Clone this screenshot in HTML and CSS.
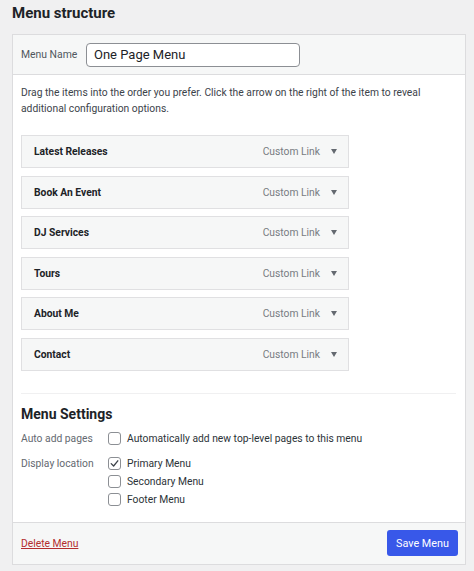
FILE: index.html
```html
<!DOCTYPE html>
<html lang="en">
<head>
<meta charset="utf-8">
<title>Menu structure</title>
<link rel="stylesheet" href="styles.css">
</head>
<body>
<div class="page">
  <h2 class="page-title">Menu structure</h2>
  <div class="panel">
    <div class="panel-head">
      <label class="name-label" for="menu-name">Menu Name</label>
      <input id="menu-name" class="name-input" type="text" value="One Page Menu">
    </div>
    <div class="panel-body">
      <p class="desc">Drag the items into the order you prefer. Click the arrow on the right of the item to reveal additional configuration options.</p>
      <ul class="items">
        <li class="item"><span class="item-title">Latest Releases</span><span class="item-type">Custom Link</span><span class="arrow"></span></li>
        <li class="item"><span class="item-title">Book An Event</span><span class="item-type">Custom Link</span><span class="arrow"></span></li>
        <li class="item"><span class="item-title">DJ Services</span><span class="item-type">Custom Link</span><span class="arrow"></span></li>
        <li class="item"><span class="item-title">Tours</span><span class="item-type">Custom Link</span><span class="arrow"></span></li>
        <li class="item"><span class="item-title">About Me</span><span class="item-type">Custom Link</span><span class="arrow"></span></li>
        <li class="item"><span class="item-title">Contact</span><span class="item-type">Custom Link</span><span class="arrow"></span></li>
      </ul>
      <div class="settings">
        <h3 class="settings-title">Menu Settings</h3>
        <div class="setting-row">
          <span class="setting-label">Auto add pages</span>
          <div class="options">
            <label class="opt"><span class="box"></span>Automatically add new top-level pages to this menu</label>
          </div>
        </div>
        <div class="setting-row">
          <span class="setting-label">Display location</span>
          <div class="options">
            <label class="opt"><span class="box checked"><svg viewBox="0 0 13 13" width="13" height="13"><path d="M3.2 6.6 L5.6 9 L9.8 3.8" fill="none" stroke="#3c434a" stroke-width="1.3" stroke-linecap="round" stroke-linejoin="round"/></svg></span>Primary Menu</label>
            <label class="opt"><span class="box"></span>Secondary Menu</label>
            <label class="opt"><span class="box"></span>Footer Menu</label>
          </div>
        </div>
      </div>
    </div>
    <div class="panel-foot">
      <a class="delete" href="#">Delete Menu</a>
      <button class="save" type="button">Save Menu</button>
    </div>
  </div>
</div>
</body>
</html>
```
FILE: styles.css
```css
* { box-sizing: border-box; }
html, body { margin: 0; padding: 0; }
body {
  background: #f0f0f1;
  font-family: Roboto, "Liberation Sans", Arial, sans-serif;
  color: #1d2327;
  width: 474px;
  height: 571px;
  overflow: hidden;
}
.page { padding: 4px 8px 0 12px; }
.page-title {
  margin: 0;
  font-size: 15px;
  font-weight: 700;
  line-height: 18px;
  height: 30px;
  color: #1d2327;
}
.panel {
  background: #fff;
  border: 1px solid #dcdcde;
  width: 454px;
}
.panel-head {
  background: #f6f7f7;
  border-bottom: 1px solid #dcdcde;
  height: 40px;
  display: flex;
  align-items: center;
  padding: 0 8px;
}
.name-label {
  font-size: 10.4px;
  color: #50575e;
  width: 65px;
}
.name-input {
  width: 214px;
  height: 24px;
  border: 1px solid #8c8f94;
  border-radius: 4px;
  padding: 0 7px;
  font-family: inherit;
  font-size: 13px;
  color: #1d2327;
  background: #fff;
  margin: 0;
}
.panel-body { padding: 10px 9px 0 8px; }
.desc {
  margin: 0 0 18px;
  font-size: 10.3px;
  line-height: 16px;
  color: #3c434a;
}
.items {
  list-style: none;
  margin: 0;
  padding: 0;
  display: flex;
  flex-direction: column;
  gap: 7.5px;
}
.item {
  width: 328px;
  height: 33px;
  background: #f6f7f7;
  border: 1px solid #e0e0e2;
  display: flex;
  align-items: center;
  padding: 0 10px 0 12px;
}
.item-title {
  flex: 1;
  font-size: 10.3px;
  font-weight: 700;
  color: #1d2327;
}
.item-type {
  font-size: 10.3px;
  color: #787c82;
  margin-right: 11px;
}
.arrow {
  width: 0;
  height: 0;
  border-left: 3.5px solid transparent;
  border-right: 3.5px solid transparent;
  border-top: 5px solid #646970;
  margin-right: 1px;
}
.settings {
  margin-top: 22px;
  border-top: 1px solid #f0f0f1;
  padding-top: 11px;
  padding-bottom: 6px;
}
.settings-title {
  margin: 0 0 7px;
  font-size: 14px;
  font-weight: 700;
  line-height: 18px;
  color: #1d2327;
}
.setting-row {
  display: flex;
  margin-bottom: 7px;
}
.setting-label {
  width: 87px;
  font-size: 10.3px;
  line-height: 18px;
  color: #646970;
}
.options { display: flex; flex-direction: column; }
.opt {
  display: flex;
  align-items: center;
  font-size: 10.3px;
  line-height: 18px;
  color: #2c3338;
}
.box {
  width: 13px;
  height: 13px;
  border: 1px solid #8c8f94;
  border-radius: 3px;
  margin-right: 6px;
  background: #fff;
  display: flex;
  align-items: center;
  justify-content: center;
}
.box svg { display: block; margin: -1px; }
.panel-foot {
  background: #f6f7f7;
  border-top: 1px solid #dcdcde;
  height: 42px;
  display: flex;
  align-items: center;
  justify-content: space-between;
  padding: 0 7px 0 8px;
}
.delete {
  font-size: 10.3px;
  color: #b32d2e;
  text-decoration: underline;
}
.save {
  width: 71px;
  height: 26px;
  background: #3858e9;
  color: #fff;
  border: 0;
  border-radius: 3px;
  font-family: inherit;
  font-size: 10.8px;
  padding: 0;
}
```
